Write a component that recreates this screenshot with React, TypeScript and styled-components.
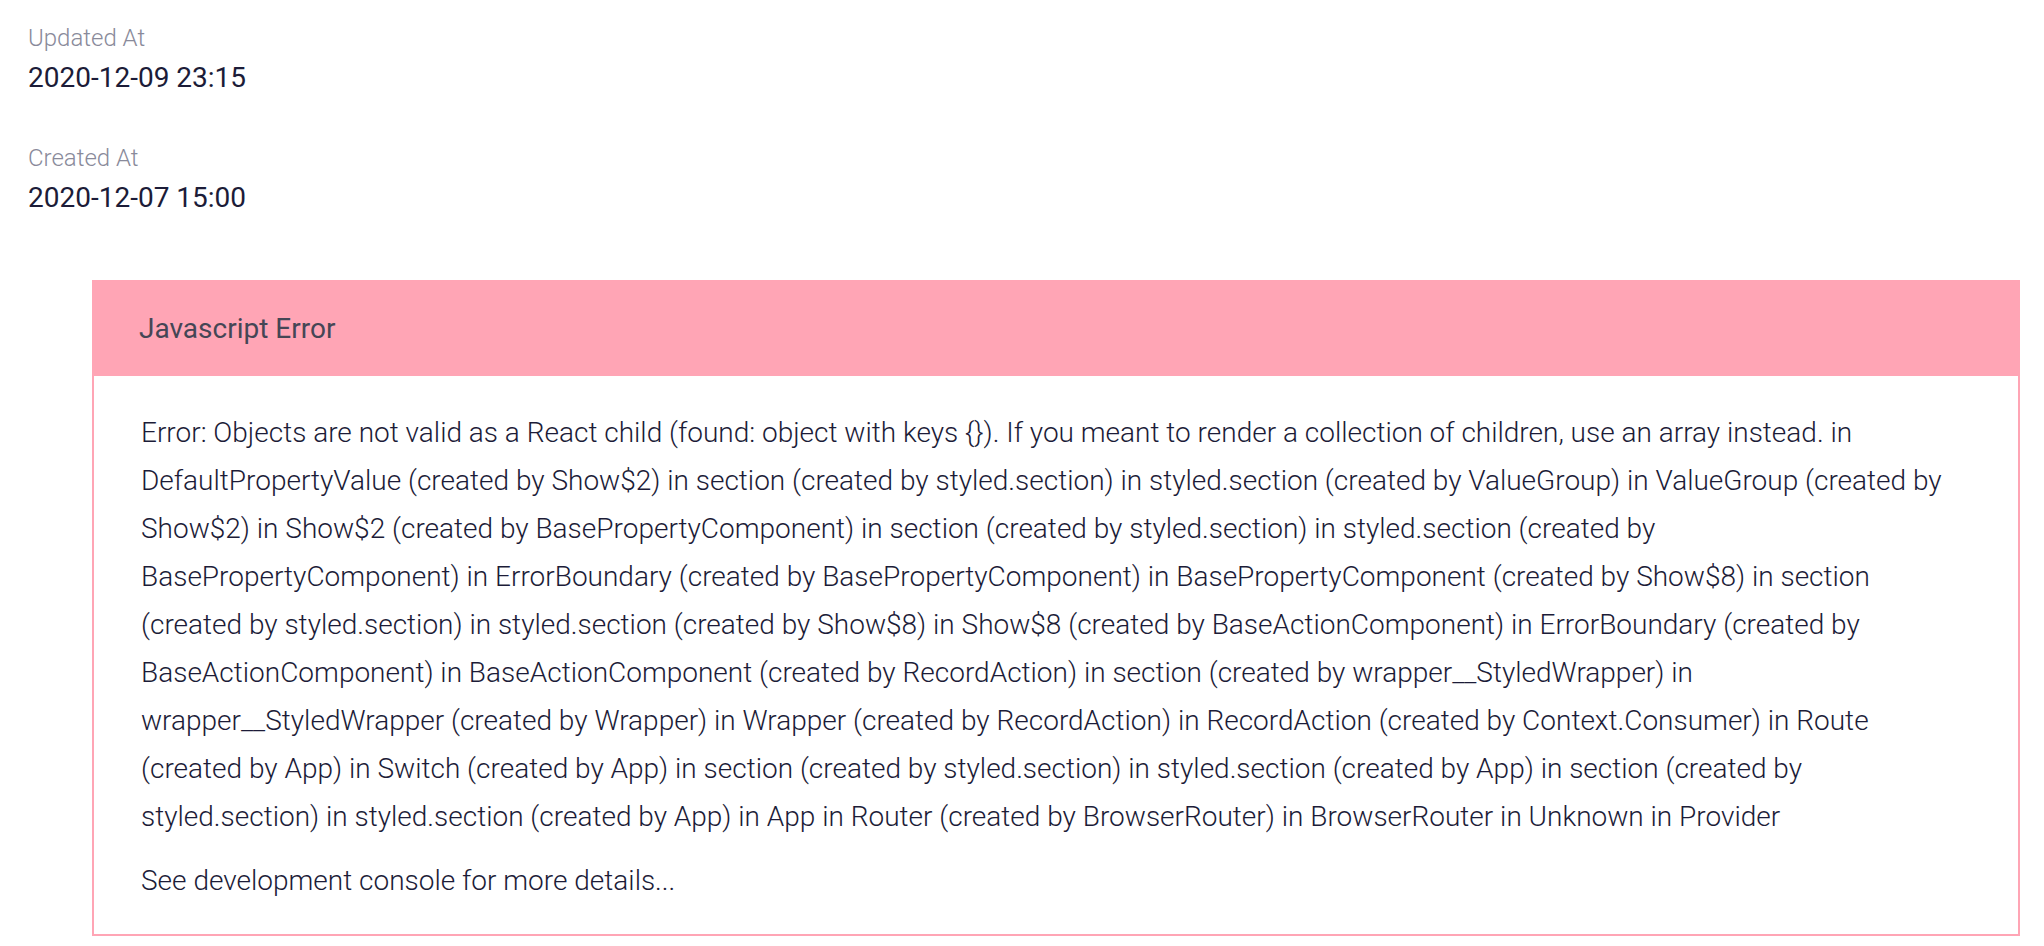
import React from "react";
import styled, { createGlobalStyle } from "styled-components";

const GlobalStyle = createGlobalStyle`
  html, body {
    margin: 0;
    padding: 0;
    background: #ffffff;
  }
  body {
    font-family: Roboto, "Liberation Sans", sans-serif;
    -webkit-font-smoothing: antialiased;
  }
`;

const Page = styled.main`
  padding: 22px 24px 0 28px;
`;

const ValueGroup = styled.section`
  margin-bottom: 48px;
`;

const Label = styled.div`
  font-size: 24px;
  line-height: 32px;
  font-weight: 300;
  color: #898a9a;
  margin-bottom: 8px;
`;

const Value = styled.div`
  font-size: 28px;
  line-height: 32px;
  font-weight: 400;
  color: #1c1c38;
`;

const MessageBox = styled.section`
  margin: 66px 0 0 64px;
  display: flex;
  flex-direction: column;
`;

const MessageHeader = styled.header`
  height: 96px;
  display: flex;
  align-items: center;
  padding: 0 47px;
  background: #ffa5b5;
  color: #454655;
  font-size: 28px;
  font-weight: 400;
`;

const MessageBody = styled.div`
  border: 2px solid #ffa5b5;
  border-top: none;
  padding: 33px 47px 29px;
`;

const Paragraph = styled.p`
  margin: 0 0 16px;
  font-size: 28px;
  line-height: 48px;
  font-weight: 300;
  color: #1c1c38;

  &:last-child {
    margin-bottom: 0;
  }
`;

const errorText =
  "Error: Objects are not valid as a React child (found: object with keys {}). If you meant to render a collection of children, use an array instead. in DefaultPropertyValue (created by Show$2) in section (created by styled.section) in styled.section (created by ValueGroup) in ValueGroup (created by Show$2) in Show$2 (created by BasePropertyComponent) in section (created by styled.section) in styled.section (created by BasePropertyComponent) in ErrorBoundary (created by BasePropertyComponent) in BasePropertyComponent (created by Show$8) in section (created by styled.section) in styled.section (created by Show$8) in Show$8 (created by BaseActionComponent) in ErrorBoundary (created by BaseActionComponent) in BaseActionComponent (created by RecordAction) in section (created by wrapper__StyledWrapper) in wrapper__StyledWrapper (created by Wrapper) in Wrapper (created by RecordAction) in RecordAction (created by Context.Consumer) in Route (created by App) in Switch (created by App) in section (created by styled.section) in styled.section (created by App) in section (created by styled.section) in styled.section (created by App) in App in Router (created by BrowserRouter) in BrowserRouter in Unknown in Provider";

const fields = [
  { label: "Updated At", value: "2020-12-09 23:15" },
  { label: "Created At", value: "2020-12-07 15:00" },
];

export default function App() {
  return (
    <>
      <GlobalStyle />
      <Page>
        {fields.map((f) => (
          <ValueGroup key={f.label}>
            <Label>{f.label}</Label>
            <Value>{f.value}</Value>
          </ValueGroup>
        ))}
        <MessageBox>
          <MessageHeader>Javascript Error</MessageHeader>
          <MessageBody>
            <Paragraph>{errorText}</Paragraph>
            <Paragraph>See development console for more details...</Paragraph>
          </MessageBody>
        </MessageBox>
      </Page>
    </>
  );
}
